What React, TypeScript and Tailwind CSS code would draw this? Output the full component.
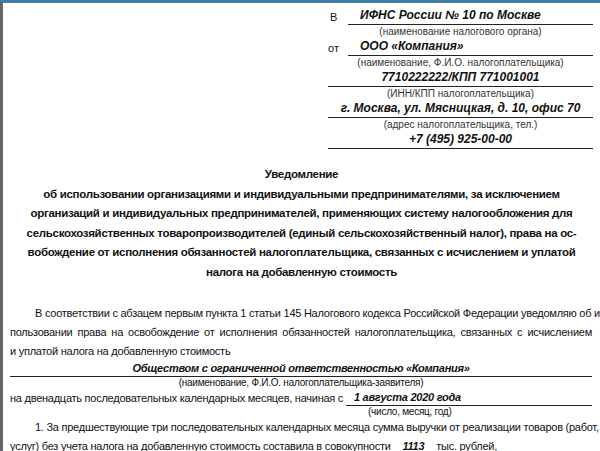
export default function App() {
  const font = { fontFamily: '"Liberation Sans",Arial,sans-serif' };
  const cap = "text-center text-[10px] leading-[10px] text-[#333] h-[10px] whitespace-nowrap";
  const val = "text-center italic font-bold text-[12px] leading-[14px] border-b border-[#222] h-[17px] whitespace-nowrap";
  const J = "[text-align-last:justify] text-justify whitespace-nowrap";
  return (
    <div style={font} className="w-[600px] h-[451px] bg-white border-t-[3px] border-t-[#3f7fa6] border-l-[3px] border-l-[#666] text-[#111] overflow-hidden">
      <div className="ml-[325px] mr-[7px] mt-[5px] flex flex-col gap-[2px]">
        <div className="flex items-end"><span className="w-[20px] text-[11px] pl-[2px]">В</span><div className={val + " flex-1 text-left pl-[12px]"}>ИФНС России № 10 по Москве</div></div>
        <div className={cap}>(наименование налогового органа)</div>
        <div className="flex items-end"><span className="w-[20px] text-[11px]">от</span><div className={val + " flex-1 text-left pl-[12px]"}>ООО «Компания»</div></div>
        <div className={cap}>(наименование, Ф.И.О. налогоплательщика)</div>
        <div className={val}>7710222222/КПП 771001001</div>
        <div className={cap}>(ИНН/КПП налогоплательщика)</div>
        <div className={val}>г. Москва, ул. Мясницкая, д. 10, офис 70</div>
        <div className={cap}>(адрес налогоплательщика, тел.)</div>
        <div className={val}>+7 (495) 925-00-00</div>
      </div>
      <div className="mt-[16px] px-[4px] text-center font-bold text-[11.5px] leading-[19.5px] tracking-[-0.3px] whitespace-nowrap">
        <div>Уведомление</div>
        <div>об использовании организациями и индивидуальными предпринимателями, за исключением</div>
        <div>организаций и индивидуальных предпринимателей, применяющих систему налогообложения для</div>
        <div>сельскохозяйственных товаропроизводителей (единый сельскохозяйственный налог), права на ос-</div>
        <div>вобождение от исполнения обязанностей налогоплательщика, связанных с исчислением и уплатой</div>
        <div>налога на добавленную стоимость</div>
      </div>
      <div className="mt-[22px] pl-[7px] pr-[8px] text-[11px] leading-[19px] tracking-[-0.25px]">
        <div className={J + " pl-[25px]"}>В соответствии с абзацем первым пункта 1 статьи 145 Налогового кодекса Российской Федерации уведомляю об ис-</div>
        <div className={J}>пользовании права на освобождение от исполнения обязанностей налогоплательщика, связанных с исчислением</div>
        <div className="whitespace-nowrap">и уплатой налога на добавленную стоимость</div>
        <div className="text-center italic font-bold border-b border-[#222] leading-[15px]">Обществом с ограниченной ответственностью «Компания»</div>
        <div className="text-center text-[10px] leading-[12px]">(наименование, Ф.И.О. налогоплательщика-заявителя)</div>
        <div className="flex items-end leading-[16px] whitespace-nowrap"><span>на двенадцать последовательных календарных месяцев, начиная с&nbsp;</span><span className="flex-1 border-b border-[#222] italic font-bold pl-[8px]">1 августа 2020 года</span></div>
        <div className="text-[10px] leading-[12px] pl-[358px]">(число, месяц, год)</div>
        <div className={J + " pl-[25px]"}>1. За предшествующие три последовательных календарных месяца сумма выручки от реализации товаров (работ,</div>
        <div className="whitespace-nowrap">услуг) без учета налога на добавленную стоимость составила в совокупности <span className="inline-block w-[40px] text-center italic font-bold border-b border-[#222] leading-[14px]">1113</span> тыс. рублей,</div>
        <div className="flex items-end leading-[16px] whitespace-nowrap"><span>в том числе&nbsp;</span><span className="flex-1 border-b border-[#222] italic font-bold text-center">май 2020 года — 343 тыс. руб.; июнь 2020 года — 421 тыс. руб.; июль 2020 года — 349 тыс. руб.</span></div>
        <div className="text-center text-[10px] leading-[12px]">(указывается помесячно)</div>
        <div className={J + " pl-[25px]"}>2. Документы, подтверждающие соблюдение условий предоставления освобождения от исполнения обязанностей</div>
        <div className="whitespace-nowrap">налогоплательщика, связанных с исчислением и уплатой налога</div>
      </div>
    </div>
  );
}
